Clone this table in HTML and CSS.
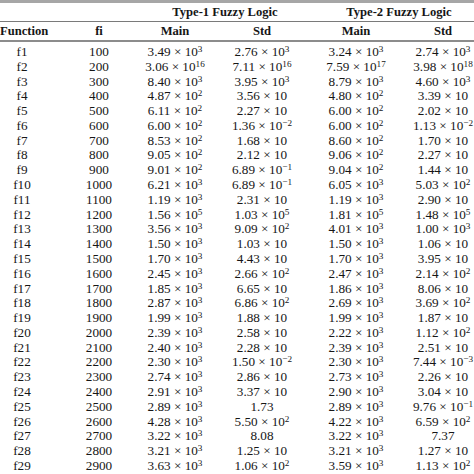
FILE: index.html
```html
<!DOCTYPE html>
<html>
<head>
<meta charset="utf-8">
<link rel="stylesheet" href="styles.css">
</head>
<body>
<div class="page">
<table class="results">
<colgroup>
<col class="c1"><col class="c2"><col class="c3"><col class="c4"><col class="c5"><col class="c6">
</colgroup>
<thead>
<tr class="group-row">
<th class="first"></th><th></th>
<th colspan="2" class="grp grp1">Type-1 Fuzzy Logic</th>
<th colspan="2" class="grp grp2">Type-2 Fuzzy Logic</th>
</tr>
<tr class="head-row">
<th class="first">Function</th><th>fi</th><th>Main</th><th>Std</th><th>Main</th><th>Std</th>
</tr>
</thead>
<tbody>
<tr class="top"><td class="first">f1</td><td>100</td><td>3.49 × 10<sup>3</sup></td><td>2.76 × 10<sup>3</sup></td><td>3.24 × 10<sup>3</sup></td><td>2.74 × 10<sup>3</sup></td></tr>
<tr><td class="first">f2</td><td>200</td><td>3.06 × 10<sup>16</sup></td><td>7.11 × 10<sup>16</sup></td><td>7.59 × 10<sup>17</sup></td><td>3.98 × 10<sup>18</sup></td></tr>
<tr><td class="first">f3</td><td>300</td><td>8.40 × 10<sup>3</sup></td><td>3.95 × 10<sup>3</sup></td><td>8.79 × 10<sup>3</sup></td><td>4.60 × 10<sup>3</sup></td></tr>
<tr><td class="first">f4</td><td>400</td><td>4.87 × 10<sup>2</sup></td><td>3.56 × 10</td><td>4.80 × 10<sup>2</sup></td><td>3.39 × 10</td></tr>
<tr><td class="first">f5</td><td>500</td><td>6.11 × 10<sup>2</sup></td><td>2.27 × 10</td><td>6.00 × 10<sup>2</sup></td><td>2.02 × 10</td></tr>
<tr><td class="first">f6</td><td>600</td><td>6.00 × 10<sup>2</sup></td><td>1.36 × 10<sup>−2</sup></td><td>6.00 × 10<sup>2</sup></td><td>1.13 × 10<sup>−2</sup></td></tr>
<tr><td class="first">f7</td><td>700</td><td>8.53 × 10<sup>2</sup></td><td>1.68 × 10</td><td>8.60 × 10<sup>2</sup></td><td>1.70 × 10</td></tr>
<tr><td class="first">f8</td><td>800</td><td>9.05 × 10<sup>2</sup></td><td>2.12 × 10</td><td>9.06 × 10<sup>2</sup></td><td>2.27 × 10</td></tr>
<tr><td class="first">f9</td><td>900</td><td>9.01 × 10<sup>2</sup></td><td>6.89 × 10<sup>−1</sup></td><td>9.04 × 10<sup>2</sup></td><td>1.44 × 10</td></tr>
<tr><td class="first">f10</td><td>1000</td><td>6.21 × 10<sup>3</sup></td><td>6.89 × 10<sup>−1</sup></td><td>6.05 × 10<sup>3</sup></td><td>5.03 × 10<sup>2</sup></td></tr>
<tr><td class="first">f11</td><td>1100</td><td>1.19 × 10<sup>3</sup></td><td>2.31 × 10</td><td>1.19 × 10<sup>3</sup></td><td>2.90 × 10</td></tr>
<tr><td class="first">f12</td><td>1200</td><td>1.56 × 10<sup>5</sup></td><td>1.03 × 10<sup>5</sup></td><td>1.81 × 10<sup>5</sup></td><td>1.48 × 10<sup>5</sup></td></tr>
<tr><td class="first">f13</td><td>1300</td><td>3.56 × 10<sup>3</sup></td><td>9.09 × 10<sup>2</sup></td><td>4.01 × 10<sup>3</sup></td><td>1.00 × 10<sup>3</sup></td></tr>
<tr><td class="first">f14</td><td>1400</td><td>1.50 × 10<sup>3</sup></td><td>1.03 × 10</td><td>1.50 × 10<sup>3</sup></td><td>1.06 × 10</td></tr>
<tr><td class="first">f15</td><td>1500</td><td>1.70 × 10<sup>3</sup></td><td>4.43 × 10</td><td>1.70 × 10<sup>3</sup></td><td>3.95 × 10</td></tr>
<tr><td class="first">f16</td><td>1600</td><td>2.45 × 10<sup>3</sup></td><td>2.66 × 10<sup>2</sup></td><td>2.47 × 10<sup>3</sup></td><td>2.14 × 10<sup>2</sup></td></tr>
<tr><td class="first">f17</td><td>1700</td><td>1.85 × 10<sup>3</sup></td><td>6.65 × 10</td><td>1.86 × 10<sup>3</sup></td><td>8.06 × 10</td></tr>
<tr><td class="first">f18</td><td>1800</td><td>2.87 × 10<sup>3</sup></td><td>6.86 × 10<sup>2</sup></td><td>2.69 × 10<sup>3</sup></td><td>3.69 × 10<sup>2</sup></td></tr>
<tr><td class="first">f19</td><td>1900</td><td>1.99 × 10<sup>3</sup></td><td>1.88 × 10</td><td>1.99 × 10<sup>3</sup></td><td>1.87 × 10</td></tr>
<tr><td class="first">f20</td><td>2000</td><td>2.39 × 10<sup>3</sup></td><td>2.58 × 10</td><td>2.22 × 10<sup>3</sup></td><td>1.12 × 10<sup>2</sup></td></tr>
<tr><td class="first">f21</td><td>2100</td><td>2.40 × 10<sup>3</sup></td><td>2.28 × 10</td><td>2.39 × 10<sup>3</sup></td><td>2.51 × 10</td></tr>
<tr><td class="first">f22</td><td>2200</td><td>2.30 × 10<sup>3</sup></td><td>1.50 × 10<sup>−2</sup></td><td>2.30 × 10<sup>3</sup></td><td>7.44 × 10<sup>−3</sup></td></tr>
<tr><td class="first">f23</td><td>2300</td><td>2.74 × 10<sup>3</sup></td><td>2.86 × 10</td><td>2.73 × 10<sup>3</sup></td><td>2.26 × 10</td></tr>
<tr><td class="first">f24</td><td>2400</td><td>2.91 × 10<sup>3</sup></td><td>3.37 × 10</td><td>2.90 × 10<sup>3</sup></td><td>3.04 × 10</td></tr>
<tr><td class="first">f25</td><td>2500</td><td>2.89 × 10<sup>3</sup></td><td>1.73</td><td>2.89 × 10<sup>3</sup></td><td>9.76 × 10<sup>−1</sup></td></tr>
<tr><td class="first">f26</td><td>2600</td><td>4.28 × 10<sup>3</sup></td><td>5.50 × 10<sup>2</sup></td><td>4.22 × 10<sup>3</sup></td><td>6.59 × 10<sup>2</sup></td></tr>
<tr><td class="first">f27</td><td>2700</td><td>3.22 × 10<sup>3</sup></td><td>8.08</td><td>3.22 × 10<sup>3</sup></td><td>7.37</td></tr>
<tr><td class="first">f28</td><td>2800</td><td>3.21 × 10<sup>3</sup></td><td>1.25 × 10</td><td>3.21 × 10<sup>3</sup></td><td>1.27 × 10</td></tr>
<tr><td class="first">f29</td><td>2900</td><td>3.63 × 10<sup>3</sup></td><td>1.06 × 10<sup>2</sup></td><td>3.59 × 10<sup>3</sup></td><td>1.13 × 10<sup>2</sup></td></tr>
</tbody>
</table>
</div>
</body>
</html>
```
FILE: styles.css
```css
html, body {
  margin: 0;
  padding: 0;
  background: #ffffff;
}
.page {
  width: 474px;
  height: 474px;
  overflow: hidden;
}
.results {
  width: 486px;
  table-layout: fixed;
  border-collapse: collapse;
  font-family: "Liberation Serif", "Times New Roman", serif;
  font-size: 13.2px;
  color: #161616;
  border-top: 3px solid #a6a6a6;
}
.c1 { width: 60px; }
.c2 { width: 78px; }
.c3 { width: 74px; }
.c4 { width: 100px; }
.c5 { width: 88px; }
.c6 { width: 86px; }
.results th, .results td {
  padding: 0;
  text-align: center;
  white-space: nowrap;
  overflow: visible;
}
.results th {
  font-weight: bold;
  font-size: 12.6px;
}
.results .first {
  padding-right: 16px;
}
.group-row th {
  height: 18px;
  border-bottom: 1px solid #7a7a7a;
  vertical-align: middle;
}
.grp2 {
  padding-left: 4px;
}
.head-row th {
  height: 18px;
  border-bottom: 2px solid #8c8c8c;
  vertical-align: middle;
}
.results td {
  height: 14.78px;
  line-height: 14.78px;
}
.results tr.top td {
  padding-top: 3px;
}
.results sup {
  font-size: 9.2px;
  line-height: 0;
  vertical-align: 0.42em;
}
```
